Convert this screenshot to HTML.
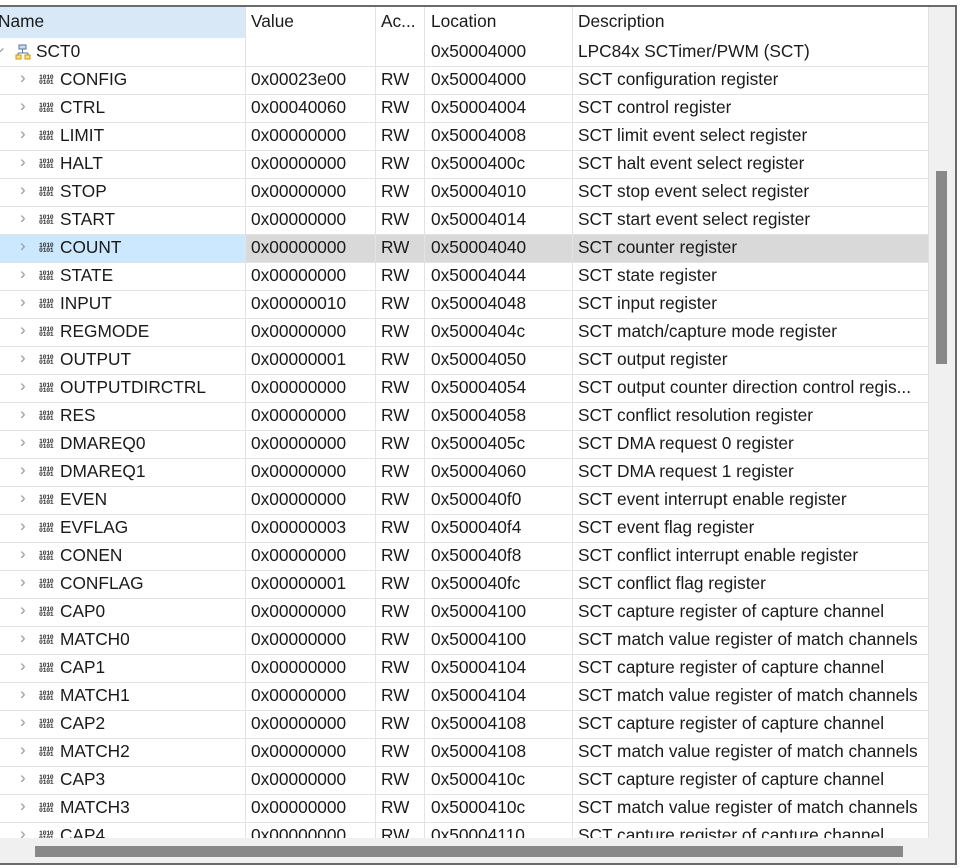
<!DOCTYPE html>
<html><head><meta charset="utf-8"><style>
*{margin:0;padding:0;box-sizing:border-box}
body{width:964px;height:868px;background:#fff;position:relative;overflow:hidden;font-family:"Liberation Sans",sans-serif;font-size:17.3px;color:#1a1a1a}
#frame{position:absolute;left:-2px;top:5px;width:959px;height:860px;border:2px solid #6b6b6b;border-left:none;overflow:hidden;background:#fff}
#clip{position:absolute;left:0;top:0;width:930px;height:831px;overflow:hidden}
.row{position:absolute;left:0;width:930px;height:28px;border-bottom:1px solid #e3e3e3}
.c{position:absolute;top:0;height:28px;line-height:25px;white-space:nowrap;overflow:hidden}
.vl{position:absolute;top:0;width:1px;height:831px;background:#e3e3e3}
.ic{position:absolute;font:bold 6.5px/5px "Liberation Mono",monospace;color:#333;letter-spacing:-0.3px;white-space:nowrap}
.ar{position:absolute;color:#999;font-size:17px}
#vs{position:absolute;left:930px;top:0;width:27px;height:831px;background:#f0f0f0;border-left:1px solid #e0e0e0}
#hs{position:absolute;left:0;top:831px;width:957px;height:27px;background:#f0f0f0}
</style></head><body>
<div id="frame">
<div id="clip">
<div class="row" style="top:0;height:31px;border:none;background:#fff">
<div class="c" style="left:0;width:247px;height:31px;line-height:29px;background:#d9e8f7">Name</div>
<div class="c" style="left:253px;line-height:29px">Value</div>
<div class="c" style="left:383px;line-height:29px">Ac...</div>
<div class="c" style="left:433px;line-height:29px">Location</div>
<div class="c" style="left:580px;line-height:29px">Description</div>
</div>
<div id="rows"></div>
<div class="vl" style="left:247px"></div><div class="vl" style="left:377px"></div><div class="vl" style="left:426px"></div><div class="vl" style="left:574px"></div>
</div>
<div id="vs"><div style="position:absolute;left:7px;top:164px;width:11px;height:193px;background:#888"></div></div>
<div id="hs"><div style="position:absolute;left:37px;top:8px;width:868px;height:11px;background:#888"></div></div>
</div>
<script>
var d=[["SCT0","","","0x50004000","LPC84x SCTimer/PWM (SCT)"],
["CONFIG","0x00023e00","RW","0x50004000","SCT configuration register"],
["CTRL","0x00040060","RW","0x50004004","SCT control register"],
["LIMIT","0x00000000","RW","0x50004008","SCT limit event select register"],
["HALT","0x00000000","RW","0x5000400c","SCT halt event select register"],
["STOP","0x00000000","RW","0x50004010","SCT stop event select register"],
["START","0x00000000","RW","0x50004014","SCT start event select register"],
["COUNT","0x00000000","RW","0x50004040","SCT counter register"],
["STATE","0x00000000","RW","0x50004044","SCT state register"],
["INPUT","0x00000010","RW","0x50004048","SCT input register"],
["REGMODE","0x00000000","RW","0x5000404c","SCT match/capture mode register"],
["OUTPUT","0x00000001","RW","0x50004050","SCT output register"],
["OUTPUTDIRCTRL","0x00000000","RW","0x50004054","SCT output counter direction control regis..."],
["RES","0x00000000","RW","0x50004058","SCT conflict resolution register"],
["DMAREQ0","0x00000000","RW","0x5000405c","SCT DMA request 0 register"],
["DMAREQ1","0x00000000","RW","0x50004060","SCT DMA request 1 register"],
["EVEN","0x00000000","RW","0x500040f0","SCT event interrupt enable register"],
["EVFLAG","0x00000003","RW","0x500040f4","SCT event flag register"],
["CONEN","0x00000000","RW","0x500040f8","SCT conflict interrupt enable register"],
["CONFLAG","0x00000001","RW","0x500040fc","SCT conflict flag register"],
["CAP0","0x00000000","RW","0x50004100","SCT capture register of capture channel"],
["MATCH0","0x00000000","RW","0x50004100","SCT match value register of match channels"],
["CAP1","0x00000000","RW","0x50004104","SCT capture register of capture channel"],
["MATCH1","0x00000000","RW","0x50004104","SCT match value register of match channels"],
["CAP2","0x00000000","RW","0x50004108","SCT capture register of capture channel"],
["MATCH2","0x00000000","RW","0x50004108","SCT match value register of match channels"],
["CAP3","0x00000000","RW","0x5000410c","SCT capture register of capture channel"],
["MATCH3","0x00000000","RW","0x5000410c","SCT match value register of match channels"],
["CAP4","0x00000000","RW","0x50004110","SCT capture register of capture channel"]];
var h="";
d.forEach(function(r,i){
var top=32+28*i;var sel=r[0]=="COUNT";
h+='<div class="row" style="top:'+top+'px;'+(sel?'background:#d9d9d9':'')+'">';
if(sel)h+='<div style="position:absolute;left:0;top:0;width:247px;height:27px;background:#cce8ff"></div>';
if(i==0){h+='<div class="ar" style="left:0px;top:1px;transform:rotate(90deg)">›</div>';
h+='<svg style="position:absolute;left:17px;top:5px" width="16" height="16"><rect x="4" y="1" width="7" height="4" fill="#cde" stroke="#579"/><path d="M7.5 5v4M3 9h10M3 9v2M13 9v2" stroke="#579" fill="none"/><rect x="1" y="11" width="5" height="4" fill="#fd8" stroke="#c90"/><rect x="10" y="11" width="5" height="4" fill="#fd8" stroke="#c90"/></svg>';
h+='<div class="c" style="left:38px">'+r[0]+'</div>';}
else{h+='<div class="ar" style="left:22px;top:1px">›</div><div class="ic" style="left:41px;top:8px">1010<br>0101</div><div class="c" style="left:62px">'+r[0]+'</div>';}
h+='<div class="c" style="left:253px">'+r[1]+'</div><div class="c" style="left:383px">'+r[2]+'</div><div class="c" style="left:433px">'+r[3]+'</div><div class="c" style="left:580px">'+r[4]+'</div></div>';});
document.getElementById("rows").innerHTML=h;
</script>
</body></html>
